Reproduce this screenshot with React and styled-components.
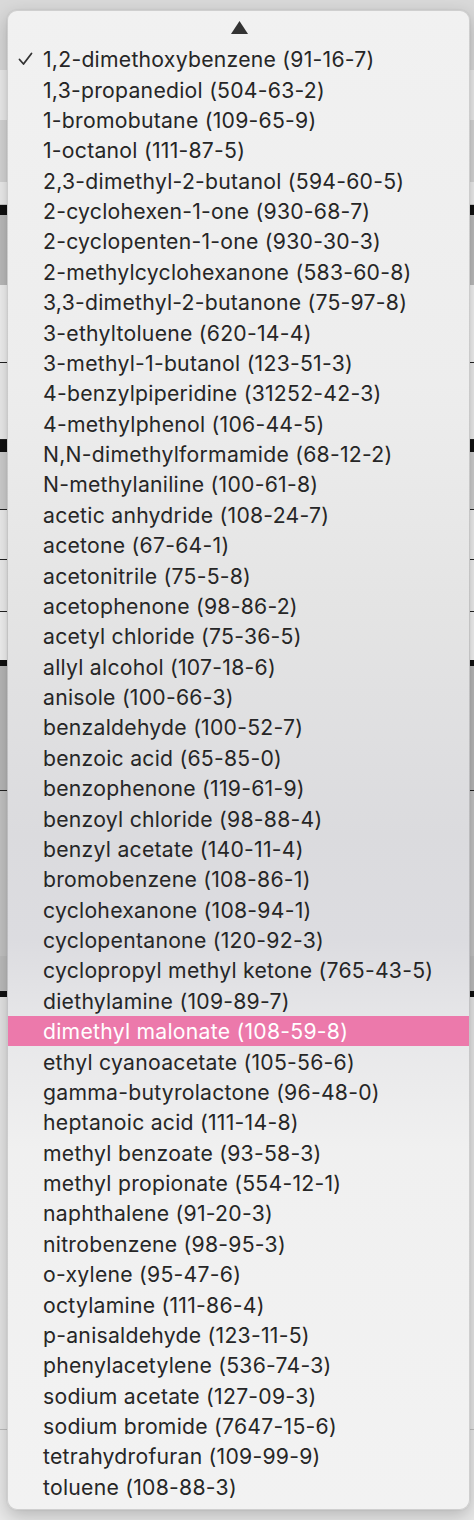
import React from 'react';
import styled, { createGlobalStyle } from 'styled-components';

const GlobalStyle = createGlobalStyle`
  html, body { margin: 0; padding: 0; }
  body {
    width: 474px;
    height: 1520px;
    overflow: hidden;
    background: #e4e4e4;
    font-family: Inter, "Noto Sans", sans-serif;
  }
`;

const chemicals = [
  '1,2-dimethoxybenzene (91-16-7)',
  '1,3-propanediol (504-63-2)',
  '1-bromobutane (109-65-9)',
  '1-octanol (111-87-5)',
  '2,3-dimethyl-2-butanol (594-60-5)',
  '2-cyclohexen-1-one (930-68-7)',
  '2-cyclopenten-1-one (930-30-3)',
  '2-methylcyclohexanone (583-60-8)',
  '3,3-dimethyl-2-butanone (75-97-8)',
  '3-ethyltoluene (620-14-4)',
  '3-methyl-1-butanol (123-51-3)',
  '4-benzylpiperidine (31252-42-3)',
  '4-methylphenol (106-44-5)',
  'N,N-dimethylformamide (68-12-2)',
  'N-methylaniline (100-61-8)',
  'acetic anhydride (108-24-7)',
  'acetone (67-64-1)',
  'acetonitrile (75-5-8)',
  'acetophenone (98-86-2)',
  'acetyl chloride (75-36-5)',
  'allyl alcohol (107-18-6)',
  'anisole (100-66-3)',
  'benzaldehyde (100-52-7)',
  'benzoic acid (65-85-0)',
  'benzophenone (119-61-9)',
  'benzoyl chloride (98-88-4)',
  'benzyl acetate (140-11-4)',
  'bromobenzene (108-86-1)',
  'cyclohexanone (108-94-1)',
  'cyclopentanone (120-92-3)',
  'cyclopropyl methyl ketone (765-43-5)',
  'diethylamine (109-89-7)',
  'dimethyl malonate (108-59-8)',
  'ethyl cyanoacetate (105-56-6)',
  'gamma-butyrolactone (96-48-0)',
  'heptanoic acid (111-14-8)',
  'methyl benzoate (93-58-3)',
  'methyl propionate (554-12-1)',
  'naphthalene (91-20-3)',
  'nitrobenzene (98-95-3)',
  'o-xylene (95-47-6)',
  'octylamine (111-86-4)',
  'p-anisaldehyde (123-11-5)',
  'phenylacetylene (536-74-3)',
  'sodium acetate (127-09-3)',
  'sodium bromide (7647-15-6)',
  'tetrahydrofuran (109-99-9)',
  'toluene (108-88-3)',
];

const SELECTED = 0;
const HOVERED = 32;

// page behind the popup: only the edges show
const bands = [
  { h: 70, bg: '#d9d9d9' },
  { h: 50, bg: '#ececec' },
  { h: 62, bg: '#d6d6d6' },
  { h: 23, bg: '#eeeeee', line: '#c8c8c8' },
  { h: 10, bg: '#111111' },
  { h: 70, bg: '#bcbcbc' },
  { h: 78, bg: '#f2f2f2', line: '#222' },
  { h: 77, bg: '#ededed', line: '#222' },
  { h: 12, bg: '#111111' },
  { h: 58, bg: '#cfcfcf', line: '#222' },
  { h: 50, bg: '#efefef', line: '#222' },
  { h: 52, bg: '#efefef', line: '#222' },
  { h: 48, bg: '#f3f3f3' },
  { h: 6, bg: '#111111' },
  { h: 125, bg: '#b8b8b8', line: '#222' },
  { h: 165, bg: '#c4c4c4' },
  { h: 35, bg: '#bdbdbd' },
  { h: 6, bg: '#111111' },
  { h: 433, bg: '#e6e6e6', line: '#bdbdbd' },
  { h: 100, bg: '#e9e9e9' },
];

const Page = styled.div`
  position: relative;
  width: 474px;
  height: 1520px;
  overflow: hidden;
`;

const Backdrop = styled.div`
  display: flex;
  flex-direction: column;
  filter: blur(0.4px);
`;

const Band = styled.div`
  height: ${p => p.$h}px;
  background: ${p => p.$bg};
  border-bottom: ${p => (p.$line ? `1px solid ${p.$line}` : 'none')};
  box-sizing: border-box;
`;

const Menu = styled.div`
  position: absolute;
  left: 7px;
  top: 10px;
  width: 463px;
  height: 1500px;
  box-sizing: border-box;
  border-radius: 10px;
  border: 1px solid rgba(0, 0, 0, 0.14);
  box-shadow: 0 6px 18px rgba(0, 0, 0, 0.22), 0 0 2px rgba(0, 0, 0, 0.1);
  background: linear-gradient(
    to bottom,
    #f1f1f1 0%,
    #ededed 25%,
    #e4e4e4 40%,
    #dbdbde 55%,
    #dcdce0 62%,
    #e7e7e9 68%,
    #f0f0f0 76%,
    #f2f2f2 100%
  );
  display: flex;
  flex-direction: column;
  overflow: hidden;
`;

const ScrollArrow = styled.div`
  height: 33px;
  display: flex;
  justify-content: center;
  align-items: center;
  padding-left: 1px;
`;

const List = styled.ul`
  list-style: none;
  margin: 0;
  padding: 0;
  display: flex;
  flex-direction: column;
`;

const Item = styled.li`
  height: 30.38px;
  display: flex;
  align-items: center;
  padding-left: 35px;
  position: relative;
  font-size: 21.2px;
  letter-spacing: 0.25px;
  color: ${p => (p.$hover ? '#ffffff' : '#262626')};
  background: ${p => (p.$hover ? '#ec79ab' : 'transparent')};
  white-space: nowrap;
`;

const Check = styled.svg`
  position: absolute;
  left: 10px;
  top: 8px;
  width: 15px;
  height: 14px;
`;

export default function App() {
  return (
    <Page>
      <GlobalStyle />
      <Backdrop>
        {bands.map((b, i) => (
          <Band key={i} $h={b.h} $bg={b.bg} $line={b.line} />
        ))}
      </Backdrop>
      <Menu>
        <ScrollArrow>
          <svg width="17" height="13" viewBox="0 0 17 13">
            <polygon points="8.5,0 17,13 0,13" fill="#333" />
          </svg>
        </ScrollArrow>
        <List>
          {chemicals.map((name, i) => (
            <Item key={name} $hover={i === HOVERED}>
              {i === SELECTED && (
                <Check viewBox="0 0 15 14">
                  <polyline
                    points="1.5,7.5 5.5,12 13.5,1.5"
                    fill="none"
                    stroke="#333"
                    strokeWidth="1.8"
                    strokeLinecap="round"
                    strokeLinejoin="round"
                  />
                </Check>
              )}
              {name}
            </Item>
          ))}
        </List>
      </Menu>
    </Page>
  );
}
